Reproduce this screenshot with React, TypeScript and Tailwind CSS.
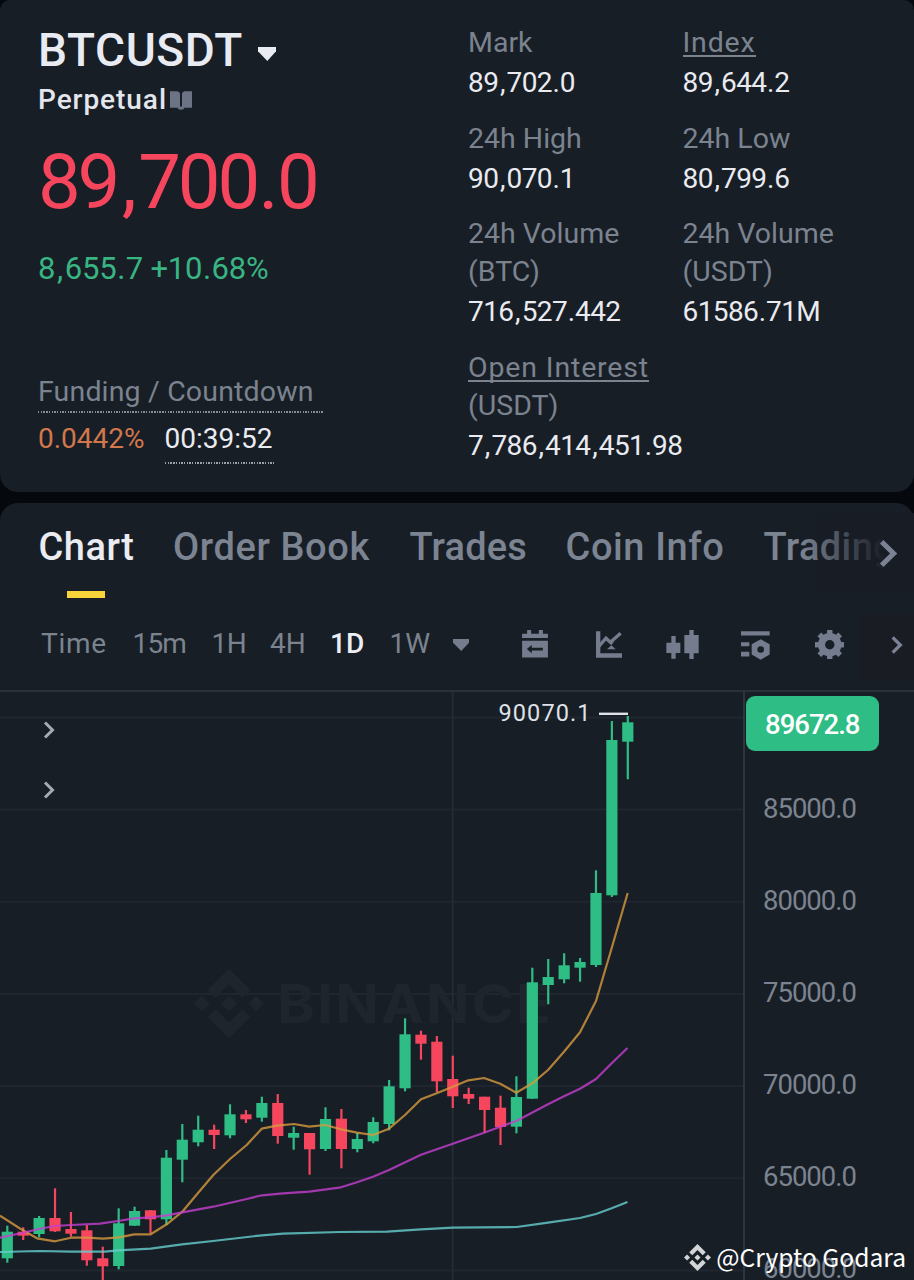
import { useState } from "react";
import type { ReactNode } from "react";
import clsx from "clsx";

type Candle = [top: number, bottom: number, high: number, low: number, up: boolean];

// body top, body bottom, wick top, wick bottom, rising
const candles: Candle[] = [
  [1231.7, 1258.3, 1225.7, 1262.7, true],
  [1231.7, 1235.7, 1227.3, 1240, false],
  [1218, 1234, 1216, 1237.3, true],
  [1218, 1231.3, 1188.3, 1232, false],
  [1229, 1233.7, 1212, 1236.7, false],
  [1230.3, 1260.3, 1225, 1265.7, false],
  [1258.3, 1266.3, 1246.7, 1282, false],
  [1223.3, 1266, 1208.3, 1269.3, true],
  [1211, 1225.7, 1206.7, 1226, true],
  [1210.3, 1219.3, 1210, 1233.3, false],
  [1157.7, 1219.3, 1150, 1225, true],
  [1139.7, 1159.7, 1124, 1182.3, true],
  [1129.7, 1142.3, 1115.7, 1146.3, true],
  [1129.7, 1135, 1124.7, 1149, false],
  [1114.3, 1135.3, 1104.3, 1138.3, true],
  [1114.3, 1119.3, 1110, 1123, false],
  [1103, 1117.7, 1096.7, 1121.7, true],
  [1103, 1136, 1094, 1143.7, false],
  [1133, 1137.7, 1126.7, 1149.7, true],
  [1133, 1149.3, 1133, 1174.7, false],
  [1119, 1149, 1107.3, 1151, true],
  [1118.7, 1149, 1109, 1168.3, false],
  [1139, 1149, 1133, 1152.3, true],
  [1122, 1141.3, 1117.3, 1143.3, true],
  [1086.3, 1124, 1080, 1130.3, true],
  [1034.3, 1088.3, 1018.3, 1091.3, true],
  [1034.7, 1043.7, 1030.7, 1059.7, false],
  [1041.7, 1081.3, 1036, 1092, false],
  [1079, 1096.3, 1055.7, 1108, false],
  [1094, 1098.7, 1087.7, 1104, false],
  [1096.7, 1110, 1096.7, 1132.7, false],
  [1107.7, 1127, 1095.7, 1145, false],
  [1097, 1126.7, 1076.3, 1133.3, true],
  [982.3, 1098.7, 967.7, 1099, true],
  [977, 985, 959, 1004.3, true],
  [965.3, 979.3, 953.3, 983.3, true],
  [962, 967.7, 958, 981.7, true],
  [893, 965, 870.3, 967, true],
  [740, 895.3, 721, 897, true],
  [722.3, 741.7, 716, 779.3, true],
];

const averages = [
  {
    color: "#d79a3f",
    points:
      "0,1215.7 20,1228.5 37,1238.3 55,1241.3 71,1237.7 87,1237.7 103,1238.7 119,1237.3 134.3,1234.3 150.7,1234.3 166.7,1224.3 182.3,1211.7 198,1193 213.3,1175 230,1159 246.7,1145 261.7,1128.7 277,1125.7 294,1124 309.3,1126.7 325,1125 341,1129.3 357,1132.7 373,1135 389,1128.7 405,1115 421,1099.3 436.7,1093.3 452.7,1086.7 468.3,1080.3 484,1078 500.3,1083.7 516.3,1092.7 532.3,1083.3 548,1070 564,1051.7 580,1032.3 596,1001 612,947 627.7,893",
  },
  {
    color: "#c63fd0",
    points:
      "0,1237.7 23,1232.7 39,1229 55,1226 71,1225 100,1223.7 118,1221 134,1218.3 150.7,1217.3 166.7,1215.3 182.3,1212.3 213.3,1206.7 246.7,1199 262,1195.3 283,1193.3 309.3,1191.7 341,1187.3 357,1182.3 373,1176.7 389,1170 421,1154.7 452.7,1143.7 484,1132.7 500.3,1126.7 516.3,1121 548,1104.3 564,1096.3 580,1088.7 596,1079 611.7,1063.3 627.5,1048",
  },
  {
    color: "#67cfcf",
    points:
      "0,1252 39,1251 71,1251.7 105,1251.7 118,1250.3 150.7,1248.7 182,1244.3 213,1241 262,1235.3 283,1233.7 340,1232 387,1231.7 421,1229.3 452.7,1227.7 516.7,1227 548,1222.7 580,1218 596,1214 611.7,1208.3 627.5,1202",
  },
];

const gridLines = [717.5, 809.5, 901.7, 994, 1086, 1178.3, 1270.5];
const axisLabels = ["85000.0", "80000.0", "75000.0", "70000.0", "65000.0", "60000.0"];

const tabs = [
  { label: "Chart", className: "w-[134.5px] tracking-[0.5px]" },
  { label: "Order Book", className: "w-[236.5px] tracking-[0.6px]" },
  { label: "Trades", className: "w-[156px] tracking-[0.2px]" },
  { label: "Coin Info", className: "w-[198px] tracking-[0.6px]" },
  { label: "Trading Data", className: "w-[260px] tracking-[0.4px]" },
];

const intervals = [
  { label: "Time", className: "w-[91.5px] tracking-[0.7px]" },
  { label: "15m", className: "w-[79px] tracking-[-0.8px]" },
  { label: "1H", className: "w-[58.5px] tracking-[-0.6px]" },
  { label: "4H", className: "w-[60px]" },
  { label: "1D", className: "w-[59.5px]" },
  { label: "1W", className: "w-[63.5px]" },
];

// Gives the separators a little more room than the font does.
function Amount({ children }: { children: string }) {
  return (
    <>
      {children.split(/([,.])/).map((part, i) => (
        <span key={i} className={clsx(part === "," && "px-[0.06em]", part === "." && "px-[0.02em]")}>
          {part}
        </span>
      ))}
    </>
  );
}

function BinanceMark(props: { x?: number; y?: number; size: number; fill: string }) {
  return (
    <svg x={props.x} y={props.y} width={props.size} height={props.size} viewBox="0 0 24 24" fill={props.fill}>
      <path d="M16.624 13.92l2.717 2.716L12 24l-7.353-7.364 2.718-2.716L12 18.58zM21.26 9.284L24 12l-2.715 2.716L18.568 12zM12 9.285l2.716 2.715L12 14.716 9.272 12zM2.716 9.284L5.409 12l-2.692 2.692L0 12zM12 0l7.341 7.34-2.717 2.716L12 5.42l-4.635 4.66-2.718-2.716z" />
    </svg>
  );
}

function Caret({ className }: { className: string }) {
  return (
    <svg viewBox="0 0 54 42" preserveAspectRatio="none" className={className} fill="currentColor">
      <path d="M0 0h54v13L28 42 0 13z" />
    </svg>
  );
}

function Stat({ label, unit, value, underline, className }: {
  label: string;
  unit?: string;
  value: string;
  underline?: boolean;
  className?: string;
}) {
  return (
    <div className={className}>
      <div className="text-[28.5px] leading-[38px] text-[#7b838f]">
        <div>
          <span
            className={clsx(
              underline && "inline-block h-[33px] border-b-2 border-[#7b838f] align-top leading-[38px] tracking-[0.85px]",
            )}
          >
            {label}
          </span>
        </div>
        {unit && <div>{unit}</div>}
      </div>
      <div className="text-[28px] leading-[41.5px] tracking-[-0.6px] text-[#e9ebf0]">
        <Amount>{value}</Amount>
      </div>
    </div>
  );
}

function Ticker() {
  return (
    <section className="flex h-[492px] rounded-t-[10px] rounded-b-[18px] bg-[#181e26] pl-[38px]">
      <div className="w-[430px] pt-[26px]">
        <div className="flex items-center">
          <h1 className="text-[46px] leading-[48px] font-medium tracking-[0.6px] text-[#e9ebf2]">BTCUSDT</h1>
          <Caret className="mt-[7px] ml-[15px] h-[14px] w-[18px] text-[#e9ebf2]" />
        </div>
        <div className="mt-[6px] flex items-center gap-[3px]">
          <span className="text-[28px] leading-[40px] font-medium tracking-[0.95px] text-[#e3e6ec]">Perpetual</span>
          <svg viewBox="0 0 66 56" className="mt-px h-[19px] w-[22px]" fill="#6b7385">
            <path d="M0 0h22q6 1 8 6v46q-2-2-8-2H0zM66 0H44q-6 1-8 6v46q2-2 8-2h22z" />
            <path d="M22 50h22q-2 6-11 6t-11-6zM29 46h8v8h-8z" />
          </svg>
        </div>
        <div className="mt-[22px] text-[76px] leading-[80px] tracking-[-3.1px] text-[#f6465d]">
          <Amount>89,700.0</Amount>
        </div>
        <div className="mt-[29px] text-[31px] leading-[36px] tracking-[-0.2px] text-[#38b582]">
          <Amount>8,655.7 +10.68%</Amount>
        </div>
        <div className="mt-[86px] w-[285px] text-[28.5px] leading-[38px] tracking-[0.16px] text-[#7b838f]">
          Funding / Countdown
        </div>
        <div className="h-[2px] w-[285px] bg-[repeating-linear-gradient(90deg,#868c97_0_1.4px,transparent_1.4px_2.7px)]" />
        <div className="mt-[6px] flex gap-[20px] text-[28px] leading-[40px]">
          <span className="text-[#d2774c]">0.0442%</span>
          <div>
            <div className="text-[#eaecf1]">00:39:52</div>
            <div className="mt-[3px] h-[2px] w-[109px] bg-[repeating-linear-gradient(90deg,#9ba0aa_0_1.4px,transparent_1.4px_2.7px)]" />
          </div>
        </div>
      </div>
      <div className="grid flex-1 grid-cols-[214.5px_1fr] content-start gap-y-[16px] pt-[24px]">
        <Stat label="Mark" value="89,702.0" />
        <Stat label="Index" value="89,644.2" underline />
        <Stat label="24h High" value="90,070.1" />
        <Stat label="24h Low" value="80,799.6" />
        <Stat label="24h Volume" unit="(BTC)" value="716,527.442" />
        <Stat label="24h Volume" unit="(USDT)" value="61586.71M" />
        <Stat label="Open Interest" unit="(USDT)" value="7,786,414,451.98" underline className="col-span-2" />
      </div>
    </section>
  );
}

function Tool({ className, viewBox, children }: { className: string; viewBox: string; children: ReactNode }) {
  return (
    <button type="button" className={className}>
      <svg viewBox={viewBox} className="h-full w-full" fill="#747c8e">
        {children}
      </svg>
    </button>
  );
}

function Toolbar() {
  const [active, setActive] = useState("1D");

  return (
    <div className="flex h-[76px] pl-[41px]">
      <div className="flex pt-[11px] text-[28px] leading-[38px]">
        {intervals.map(({ label, className }) => (
          <button
            key={label}
            type="button"
            onClick={() => setActive(label)}
            className={clsx(
              "h-[38px] text-left",
              className,
              label === active ? "font-medium text-[#eceef3]" : "text-[#7b838f]",
            )}
          >
            {label}
          </button>
        ))}
      </div>
      <Caret className="mt-[25px] h-[12px] w-[16px] shrink-0 text-[#747c8e]" />
      <div className="flex flex-1 pl-[53px]">
        <Tool className="mt-[16px] h-[27.5px] w-[26px]" viewBox="0 0 77 82">
          <path
            fillRule="evenodd"
            d="M0 11h15V0h12v11h23V0h12v11h15v13H0zM0 32h77v50H0zM14 57l15-12v8h33v8H29v8z"
          />
        </Tool>
        <Tool className="mt-[16.5px] ml-[47.5px] h-[27px] w-[26px]" viewBox="0 0 78 80">
          <path d="M0 0h13v66h65v14H0zM33 54l13-12 13 12zM37 30h18l-9 12z" />
          <path d="M7 47l23-26 13 12L74 6" fill="none" stroke="#747c8e" strokeWidth="10" />
        </Tool>
        <Tool className="mt-[16px] ml-[44.5px] h-[29px] w-[33px]" viewBox="0 0 97 87">
          <path d="M0 38h15V18h13v20h14v31H28v17H15V69H0zM54 15h15V0h13v15h15v55H82v17H69V70H54z" />
        </Tool>
        <Tool className="mt-[17px] ml-[42px] h-[29px] w-[29px]" viewBox="0 0 87 86">
          <path
            fillRule="evenodd"
            d="M0 0h86v13H0zM0 33h25v12H0zM0 62h25v14H0zM59 24l27 15v31L59 86 32 70V39zM59 45a10 10 0 1 0 0 20 10 10 0 1 0 0-20z"
          />
        </Tool>
        <Tool className="mt-[15.5px] ml-[44.5px] h-[29.5px] w-[29.5px]" viewBox="-44 -44 88 88">
          {[0, 45, 90, 135].map((angle) => (
            <rect key={angle} x="-8" y="-44" width="16" height="88" transform={`rotate(${angle})`} />
          ))}
          <circle r="35" />
          <circle r="14" fill="#181e26" />
        </Tool>
        <div className="ml-auto flex h-[66px] w-[54px] justify-end bg-[#191c23] pt-[21.5px] pr-[11px]">
          <svg viewBox="0 0 34 54" className="h-[18px] w-[12px]" fill="none" stroke="#7a8293" strokeWidth="10">
            <path d="M4 4l23 23L4 50" />
          </svg>
        </div>
      </div>
    </div>
  );
}

function PriceChart() {
  return (
    <div className="flex h-[590px] border-t-2 border-[#2a3039]">
      <svg viewBox="0 692 744 588" className="h-[588px] w-[744px] shrink-0 overflow-hidden">
        {gridLines.map((y) => (
          <rect key={y} x="0" y={y - 1} width="744" height="2" fill="#20262f" />
        ))}
        <rect x="451.7" y="692" width="2" height="588" fill="#252b34" />

        <BinanceMark x={194} y={968.5} size={70} fill="#1f252d" />
        <text
          x="277"
          y="1023.3"
          textLength="276"
          lengthAdjust="spacingAndGlyphs"
          fill="#1f252d"
          className="font-['Inter',sans-serif] text-[54px] font-bold tracking-[2px]"
        >
          BINANCE
        </text>

        {candles.map(([top, bottom, high, low, up], i) => {
          const x = 7.3 + i * 15.91;
          return (
            <g key={i} fill={up ? "#2ebd85" : "#f6465d"}>
              <rect x={x - 1.1} y={high} width="2.2" height={low - high} />
              <rect x={x - 5.6} y={top} width="11.2" height={bottom - top} />
            </g>
          );
        })}

        {averages.map(({ color, points }) => (
          <polyline
            key={color}
            points={points}
            fill="none"
            stroke={color}
            strokeWidth="2.2"
            strokeLinejoin="round"
            opacity="0.8"
          />
        ))}

        <text x="498.5" y="721.3" fill="#dfe2e8" textLength="92" className="text-[23.5px]">
          90070.1
        </text>
        <rect x="599" y="712.6" width="29" height="2.4" fill="#dfe2e8" />
        <g fill="none" stroke="#a4a9b3" strokeWidth="3">
          <path d="M45 722.5l7.5 7.5-7.5 7.5" />
          <path d="M45 782.5l7.5 7.5-7.5 7.5" />
        </g>
      </svg>

      <div className="-ml-px h-[588px] flex-1 overflow-hidden border-l-2 border-[#2f353f]">
        <div className="mt-[4px] ml-px flex h-[55px] w-[133px] items-center rounded-[9px] bg-[#2ebd85] pt-[3px] pl-[19px] text-[27.5px] font-medium tracking-[-1px] text-white">
          89672.8
        </div>
        <div className="mt-[11.5px]">
          {axisLabels.map((label) => (
            <div key={label} className="h-[92.2px] pl-[18px] text-[27.5px] leading-[92px] tracking-[-1px] text-[#7b838f]">
              {label}
            </div>
          ))}
        </div>
      </div>
    </div>
  );
}

export default function App() {
  const [tab, setTab] = useState("Chart");

  return (
    <div className="relative flex h-[1280px] w-[914px] flex-col gap-[11px] overflow-hidden bg-[#05090e] font-['Roboto','Noto_Sans',sans-serif]">
      <Ticker />

      <section className="flex-1 rounded-t-[18px] bg-[#181e26]">
        <div className="relative flex h-[111px] overflow-hidden pt-[20px] pl-[38.5px] text-[38px] leading-[48px] font-medium">
          {tabs.map(({ label, className }) => (
            <button
              key={label}
              type="button"
              onClick={() => setTab(label)}
              className={clsx(
                "flex h-[75px] shrink-0 flex-col items-start justify-between whitespace-nowrap",
                className,
                label === tab ? "text-[#eaecf2]" : "text-[#7c8492]",
              )}
            >
              {label}
              {label === tab && <span className="ml-[28.5px] h-[7px] w-[38px] bg-[#f8d33a]" />}
            </button>
          ))}
          <div className="absolute top-[10px] right-0 h-[80px] w-[114px] bg-linear-to-r from-[#181e26]/0 to-[#181c24] to-75%" />
          <svg
            viewBox="0 0 54 80"
            className="absolute top-[37px] right-[16px] h-[27px] w-[18px]"
            fill="none"
            stroke="#7a8293"
            strokeWidth="15"
          >
            <path d="M5 5l36 35L5 75" />
          </svg>
        </div>
        <Toolbar />
        <PriceChart />
      </section>

      <div className="absolute right-[8px] bottom-[6px] flex items-center gap-[5px]">
        <BinanceMark size={27} fill="#d2d4d6" />
        <span className="-mt-[3px] font-['Noto_Sans_CJK_SC',sans-serif] text-[24.6px] leading-[36px] whitespace-nowrap text-white">
          @Crypto Godara
        </span>
      </div>
    </div>
  );
}
